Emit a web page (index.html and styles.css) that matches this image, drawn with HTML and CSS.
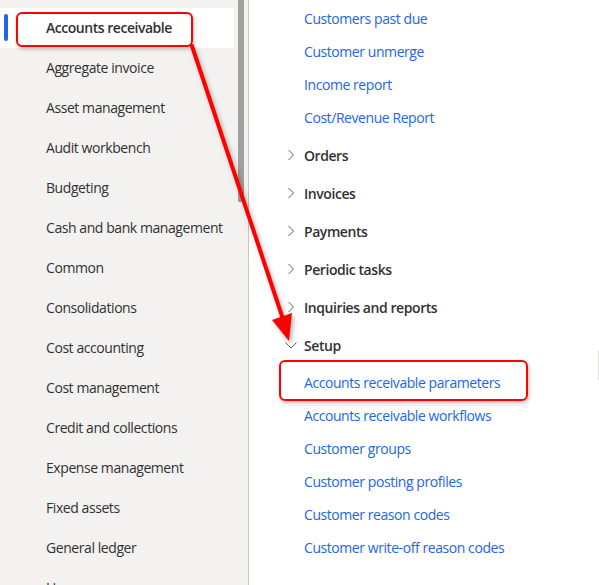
FILE: index.html
```html
<!DOCTYPE html>
<html lang="en">
<head>
<meta charset="utf-8">
<title>Accounts receivable</title>
<link rel="stylesheet" href="styles.css">
</head>
<body>
<div class="page">
  <nav class="sidenav">
    <ul class="modules">
      <li class="module selected">Accounts receivable</li>
      <li class="module">Aggregate invoice</li>
      <li class="module">Asset management</li>
      <li class="module">Audit workbench</li>
      <li class="module">Budgeting</li>
      <li class="module">Cash and bank management</li>
      <li class="module">Common</li>
      <li class="module">Consolidations</li>
      <li class="module">Cost accounting</li>
      <li class="module">Cost management</li>
      <li class="module">Credit and collections</li>
      <li class="module">Expense management</li>
      <li class="module">Fixed assets</li>
      <li class="module">General ledger</li>
      <li class="module">Human resources</li>
    </ul>
    <div class="scrolltrack"><div class="scrollthumb"></div></div>
  </nav>
  <main class="content">
    <ul class="links">
      <li class="link">Customers past due</li>
      <li class="link">Customer unmerge</li>
      <li class="link">Income report</li>
      <li class="link">Cost/Revenue Report</li>
    </ul>
    <ul class="groups">
      <li class="group"><svg class="chev" viewBox="0 0 12 12"><path d="M3.5 1 L8.5 6 L3.5 11"/></svg>Orders</li>
      <li class="group"><svg class="chev" viewBox="0 0 12 12"><path d="M3.5 1 L8.5 6 L3.5 11"/></svg>Invoices</li>
      <li class="group"><svg class="chev" viewBox="0 0 12 12"><path d="M3.5 1 L8.5 6 L3.5 11"/></svg>Payments</li>
      <li class="group"><svg class="chev" viewBox="0 0 12 12"><path d="M3.5 1 L8.5 6 L3.5 11"/></svg>Periodic tasks</li>
      <li class="group"><svg class="chev" viewBox="0 0 12 12"><path d="M3.5 1 L8.5 6 L3.5 11"/></svg>Inquiries and reports</li>
      <li class="group"><svg class="chev" viewBox="0 0 12 12"><path d="M0.5 3.5 L6 9 L11.5 3.5"/></svg>Setup</li>
    </ul>
    <ul class="links">
      <li class="link">Accounts receivable parameters</li>
      <li class="link">Accounts receivable workflows</li>
      <li class="link">Customer groups</li>
      <li class="link">Customer posting profiles</li>
      <li class="link">Customer reason codes</li>
      <li class="link">Customer write-off reason codes</li>
    </ul>
  </main>
  <div class="edge-line"></div>
  <div class="callout callout-nav"></div>
  <div class="callout callout-param"></div>
  <svg class="arrow" width="599" height="585" viewBox="0 0 599 585">
    <line x1="192" y1="46" x2="284" y2="322" stroke="#ff0000" stroke-width="4" stroke-linecap="round"/>
    <polygon points="289,341 272,320 292,313" fill="#ff0000"/>
  </svg>
</div>
</body>
</html>
```
FILE: styles.css
```css
* { box-sizing: border-box; }
html, body { margin: 0; padding: 0; }
body {
  width: 599px;
  height: 585px;
  overflow: hidden;
  background: #ffffff;
  font-family: "Segoe UI", "Open Sans", "Noto Sans", sans-serif;
  font-size: 14px;
  letter-spacing: -0.43px;
  color: #323130;
}
ul { list-style: none; margin: 0; padding: 0; }
.page {
  position: relative;
  display: flex;
  width: 599px;
  height: 585px;
}
.sidenav {
  position: relative;
  width: 249px;
  flex: none;
  height: 585px;
  background: #f3f2f1;
  border-right: 1px solid #c8c6c4;
  display: flex;
  overflow: hidden;
}
.modules {
  width: 234px;
  flex: none;
  padding-top: 8px;
}
.module {
  position: relative;
  height: 40px;
  line-height: 39px;
  padding-left: 46px;
  white-space: nowrap;
}
.module.selected {
  background: #ffffff;
  font-weight: 600;
  letter-spacing: -0.47px;
}
.module.selected::before {
  content: "";
  position: absolute;
  left: 4px;
  top: 6px;
  width: 4px;
  height: 27px;
  border-radius: 2px;
  background: #2266e3;
}
.scrolltrack {
  margin-left: 4px;
  width: 6px;
  flex: none;
}
.scrollthumb {
  width: 6px;
  height: 202px;
  background: #a19f9d;
}
.content {
  flex: 1;
  padding-top: 2px;
  padding-left: 55px;
}
.link {
  height: 33px;
  line-height: 33px;
  color: #2266e3;
  white-space: nowrap;
}
.groups { margin: 2px 0; }
.group {
  height: 38px;
  display: flex;
  align-items: center;
  margin-left: -19px;
  font-weight: 600;
  white-space: nowrap;
}
.chev {
  width: 12px;
  height: 12px;
  margin-right: 7px;
  fill: none;
  stroke: #605e5c;
  stroke-width: 1;
}
.edge-line {
  position: absolute;
  left: 598px;
  top: 350px;
  width: 1px;
  height: 30px;
  background: #e1dfdd;
}
.callout {
  position: absolute;
  border: 2px solid #ff0000;
  border-radius: 6px;
  box-shadow: 1px 2px 4px rgba(0,0,0,0.25);
}
.callout-nav { left: 16px; top: 12px; width: 177px; height: 35px; }
.callout-param { left: 279px; top: 360px; width: 249px; height: 41px; }
.arrow {
  position: absolute;
  left: 0;
  top: 0;
  filter: drop-shadow(2px 3px 2px rgba(0,0,0,0.3));
}
```
